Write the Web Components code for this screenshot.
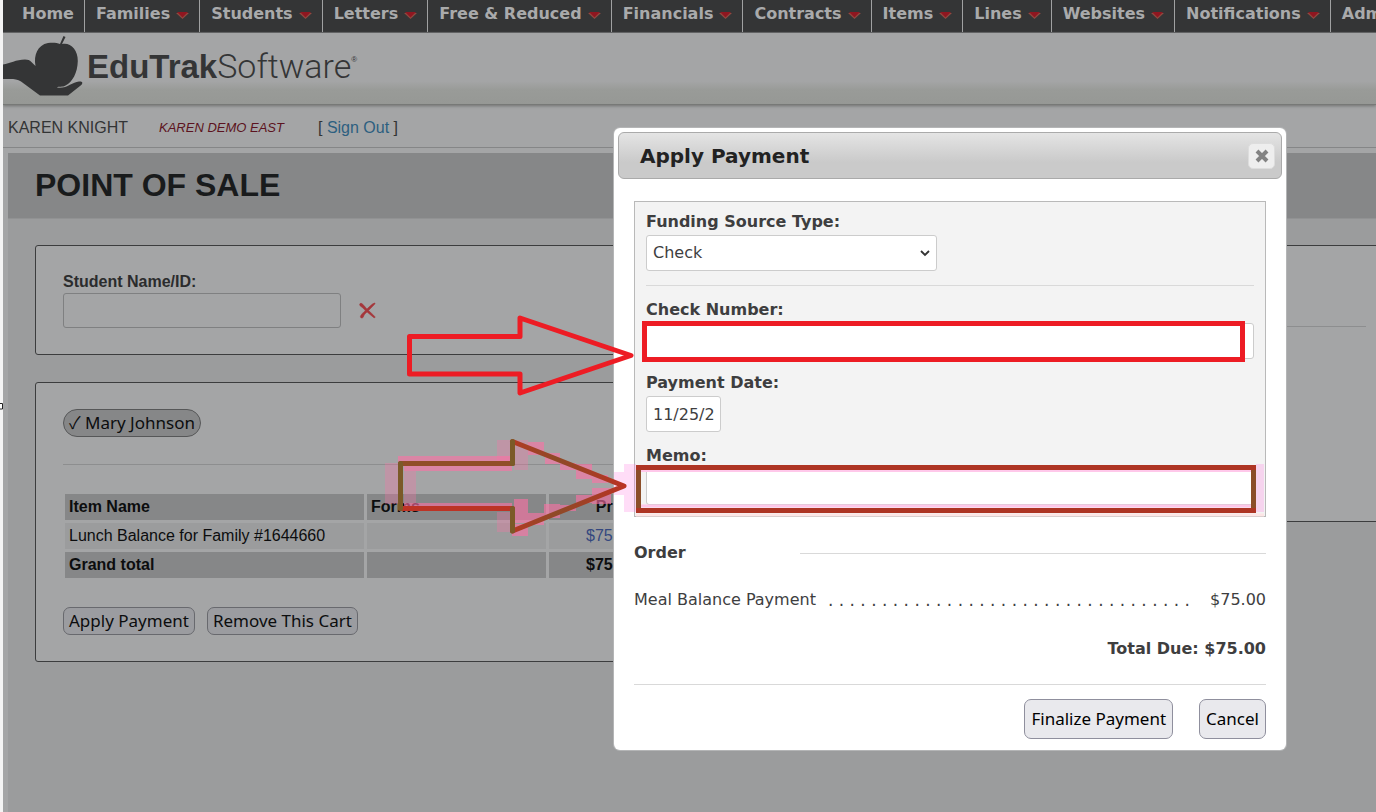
<!DOCTYPE html>
<html lang="en">
<head>
<meta charset="utf-8">
<title>EduTrak Software - Point of Sale</title>
<style>
  body { margin: 0; overflow: hidden; background: #f4f4f4; font: 16px/20px "Liberation Sans", Arial, sans-serif; color: #2b2c2d; }
</style>
</head>
<body>
<pos-app></pos-app>

<template id="t-app">
  <style>
    :host { display: block; position: relative; min-height: 100vh; box-sizing: border-box; padding-left: 3px; }
    .page { display: flex; flex-direction: column; min-height: 100vh; background: #a4a5a6; overflow: hidden; }
    main { flex: 1; margin: 5px 0 0 5px; background: #9b9c9d; }
    h1 { margin: 0; padding: 0 27px; font-size: 32px; line-height: 65px; background: #868788; color: #191b1c; border-bottom: 1px solid #919293; }
    .columns { display: grid; grid-template-columns: 60fr 42fr; gap: 28px; align-items: start; padding: 26px 0 0 27px; margin-right: -18px; }
    .stack { display: grid; gap: 27px; }
    .field { display: grid; justify-items: start; gap: 1px; }
    label { font-weight: bold; }
    .row { display: flex; align-items: center; gap: 18px; }
    input { box-sizing: border-box; width: 278px; height: 35px; border: 1px solid #7f8081; border-radius: 3px; background: #a4a5a6; font: inherit; padding: 0 6px; }
    .icon { border: 0; background: none; padding: 0; display: flex; }
    .cart { display: grid; justify-items: start; }
    hr { width: 100%; margin: 27px 0; border: 0; border-top: 1px solid #8d8e8f; }
    table { border-collapse: separate; border-spacing: 3px; margin: -1px; color: #0c0d0e; }
    th, td { box-sizing: border-box; height: 26px; padding: 0 4px; text-align: left; line-height: 24px; }
    tr.dark > * { background: #868788; font-weight: bold; }
    td { background: #9b9c9d; }
    .c1 { width: 299px; } .c2 { width: 179px; } .c3 { width: 90px; }
    .num { text-align: right; }
    a { color: #34487f; text-decoration: none; }
    .actions { display: flex; gap: 12px; margin-top: 27px; }
    .side { box-sizing: border-box; height: 277px; }
    .side hr { margin: 54px 0 0; }
  </style>
  <div class="page">
    <main-menu></main-menu>
    <brand-header></brand-header>
    <user-bar></user-bar>
    <main>
      <h1>POINT OF SALE</h1>
      <div class="columns">
        <div class="stack">
          <panel-card>
            <div class="field">
              <label for="student">Student Name/ID:</label>
              <div class="row">
                <input id="student" type="text">
                <button class="icon" type="button" aria-label="Clear"><svg width="17" height="17" viewBox="0 0 16 16"><path d="M1 1.500c2-1 3 1.500 6.500 5C10 4.500 12.500 1.500 14.500 1c1 .2.800.800-.2 1.500L9 8c2 2 4.500 4 6 5.800.5 1-.5 1.300-1.300.7L7.600 9.400C5.600 11 4.500 12.500 4 14.300c-.7 1.200-2.700.8-2.700-.5C1.500 12 4.500 9.500 6 7.900 4 6 2.500 4.500 1 3.500.5 2.800.5 2 1 1.500Z" fill="#a5373b" stroke="#a5373b" stroke-width=".5"/></svg></button>
              </div>
            </div>
          </panel-card>
          <panel-card>
            <div class="cart">
              <push-button kind="chip">✓ Mary Johnson</push-button>
              <hr>
              <table>
                <tr class="dark"><th class="c1">Item Name</th><th class="c2">Forms</th><th class="c3 num">Price</th></tr>
                <tr><td>Lunch Balance for Family #1644660</td><td></td><td class="num"><a href="#">$75.00</a></td></tr>
                <tr class="dark"><td>Grand total</td><td></td><td class="num">$75.00</td></tr>
              </table>
              <div class="actions">
                <push-button kind="dim">Apply Payment</push-button>
                <push-button kind="dim">Remove This Cart</push-button>
              </div>
            </div>
          </panel-card>
        </div>
        <panel-card class="side"><hr></panel-card>
      </div>
    </main>
  </div>
  <payment-dialog></payment-dialog>
  <callout-layer></callout-layer>
</template>

<template id="t-menu">
  <style>
    :host { display: block; background: #343536; border-bottom: 1px solid #606162; font: bold 16px/20px "DejaVu Sans", Verdana, sans-serif; }
    nav { display: flex; height: 32px; padding-left: 8px; }
    a { display: flex; flex: none; align-items: center; gap: 6px; box-sizing: border-box; height: 32px; padding: 0 10px 4px 11px; border-right: 1px solid #a0a1a2; color: #a9aaab; text-decoration: none; }
    svg { margin-top: 2px; }
  </style>
  <nav></nav>
</template>

<template id="t-header">
  <style>
    :host { display: flex; align-items: flex-start; height: 71px; background: linear-gradient(#a4a5a6 0 68%, #999b98 80%, #969895); border-bottom: 1px solid #777977; box-shadow: 0 1px 3px #707170; color: #343536; }
    svg { flex: none; }
    .name { display: flex; align-items: baseline; padding: 9px 0 0 1px; line-height: 48px; }
    b { font-size: 33px; }
    span { font: 300 34px/48px Roboto, sans-serif; }
    sup { font-size: 8px; line-height: 8px; align-self: flex-start; padding-top: 14px; }
  </style>
  <svg width="83" height="71" viewBox="0 0 83 71" fill="#343536" aria-hidden="true">
    <path d="M57 11 L60.500 3 L62.500 4 L59 11 C67 9 75 16 74.800 28 C74.500 40 69.500 49 62.500 52.500 C60 54.500 55 53 54 54.500 C63 56.500 69 49 76 48.500 C80 48 80.500 50.500 77 53 L65 62.500 H37 L18 48.500 C13 45 6 46.500 0 46 V31.500 C7 30.500 13 26.500 22 26.500 C28 26.500 29 30 32.500 33 C30.500 22 34.500 12 45 10 C50 9.200 54 9.800 57 11Z"/>
  </svg>
  <div class="name"><b>EduTrak</b><span>Software</span><sup>®</sup></div>
</template>

<template id="t-user">
  <style>
    :host { display: flex; align-items: center; box-sizing: border-box; height: 43px; padding: 4px 0 0 5px; border-bottom: 1px solid #858687; color: #333435; }
    em { margin: 0 34px 0 31px; font-size: 13px; color: #5c1320; }
    a { color: #2d5f80; text-decoration: none; }
  </style>
  <span>KAREN KNIGHT</span><em>KAREN DEMO EAST</em><span>[ <a href="#">Sign Out</a> ]</span>
</template>

<template id="t-card">
  <style>:host { display: block; padding: 26px 27px; border: 1px solid #3c3d3e; border-radius: 3px; background: #a4a5a6; }</style>
  <slot></slot>
</template>

<template id="t-button">
  <style>
    :host { display: inline-flex; }
    button { box-sizing: border-box; height: 28px; padding: 0 5px; border: 1px solid #68696e; border-radius: 7px; background: #9b9ca0; color: #0c0d0e; font: 17px/24px "Noto Sans", "Noto Sans CJK SC", "DejaVu Sans", sans-serif; white-space: nowrap; }
    :host([kind=chip]) button { border-radius: 14px; background: #868788; border-color: #565758; }
    :host([kind=light]) button { height: 40px; padding: 0 6px; background: #e9e9ed; border-color: #8f8f9d; color: #000; }
  </style>
  <button type="button"><slot></slot></button>
</template>

<template id="t-dialog">
  <style>
    :host { position: absolute; left: 614px; top: 128px; width: 672px; box-sizing: border-box; padding: 4px 4px 11px; border-radius: 6px; background: #fff; box-shadow: 0 0 0 1px #b4b5b6; font: 16px/20px "DejaVu Sans", Verdana, sans-serif; color: #3e3e3f; }
    header { display: flex; align-items: center; justify-content: space-between; box-sizing: border-box; height: 47px; padding: 0 6px 0 21px; border: 1px solid #aaa; border-radius: 6px; background: linear-gradient(#e4e4e4, #cacaca 65%, #cacaca); }
    h2 { margin: 0; font-size: 20px; color: #222; }
    .close { display: grid; place-items: center; width: 27px; height: 26px; padding: 0; border: 1px solid #ddd; border-radius: 5px; background: #eee; }
    .body { padding: 22px 16px 0; }
    form { display: grid; gap: 14px; padding: 10px 11px 11px; border: 1px solid #b9b9b9; background: #f3f3f3; }
    .field { display: grid; justify-items: start; gap: 3px; }
    label, h3, .total { font-weight: bold; }
    input, select { box-sizing: border-box; height: 36px; margin: 0; padding: 0 6px; border: 1px solid #ccc; border-radius: 3px; background: #fff; color: inherit; font: inherit; }
    .pick { display: grid; align-items: center; width: 291px; }
    .pick > * { grid-area: 1 / 1; }
    .pick svg { justify-self: end; margin-right: 7px; pointer-events: none; }
    select { appearance: none; width: 100%; }
    .wide { width: 100%; }
    .date { width: 75px; }
    hr { width: 100%; margin: 0; border: 0; border-top: 1px solid #d9d9d9; }
    .order { display: grid; grid-template-columns: 166px 1fr; align-items: center; margin-top: 26px; }
    h3 { margin: 0; font-size: 16px; }
    .line { display: flex; gap: 12px; margin-top: 27px; }
    .dots { flex: 1; height: 20px; overflow: hidden; white-space: nowrap; font-size: 17px; }
    .total { margin: 29px 0 25px; text-align: right; }
    footer { display: flex; justify-content: flex-end; gap: 26px; margin-top: 14px; }
  </style>
  <header><h2>Apply Payment</h2>
    <button class="close" type="button" aria-label="Close"><svg width="14" height="14" viewBox="0 0 14 14"><path d="M2 2 12 12M12 2 2 12" stroke="#828282" stroke-width="4"/></svg></button>
  </header>
  <div class="body">
    <form>
      <div class="field"><label for="source">Funding Source Type:</label>
        <div class="pick"><select id="source"><option>Check</option></select><svg width="10" height="7" viewBox="0 0 10 7"><path d="M1 1 5 5 9 1" fill="none" stroke="#333" stroke-width="1.800"/></svg></div></div>
      <hr>
      <div class="field"><label for="number">Check Number:</label><input id="number" class="wide" type="text"></div>
      <div class="field"><label for="date">Payment Date:</label><input id="date" class="date" type="text" value="11/25/2024"></div>
      <div class="field"><label for="memo">Memo:</label><input id="memo" class="wide" type="text"></div>
    </form>
    <div class="order"><h3>Order</h3><hr></div>
    <div class="line"><span>Meal Balance Payment</span><span class="dots">. . . . . . . . . . . . . . . . . . . . . . . . . . . . . . . . . .</span><span>$75.00</span></div>
    <div class="total">Total Due: $75.00</div>
    <hr>
    <footer><push-button kind="light">Finalize Payment</push-button><push-button kind="light">Cancel</push-button></footer>
  </div>
</template>

<template id="t-callouts">
  <style>:host { position: absolute; left: 0; top: 0; pointer-events: none; } svg { display: block; }</style>
  <svg width="1300" height="560" viewBox="0 0 1300 560" fill="none" aria-hidden="true">
    <path d="M-2 403.500H2.500V409H-2" stroke="#222" fill="#fff"/>
    <path d="M398 456H514V462H398ZM404 466H512V471H404ZM404 503H512V507H404ZM528 442H544V455H528ZM545 453H560V464H545ZM560 463H576V470H560ZM576 464H592V479H576ZM592 475H608V483H592ZM592 488H611V504H592ZM576 495H592V503H576ZM560 505H576V511H560ZM544 504H560V518H544ZM528 513H544V525H528ZM512 524H528V536H512ZM514 499H528V523H514Z" fill="#ff6fa5" opacity=".6"/>
    <path d="M385 463H398V504H385ZM404 471H416V503H404ZM497 440H528V461H497ZM514 461H528V470H514ZM497 512H510V532H497Z" fill="#ff6fa5" opacity=".3"/>
    <path d="M624 464H636V512H624ZM614 472H624V495H614ZM1256 464H1264V512H1256Z" fill="#ff80e0" opacity=".27"/>
    <path d="M641 470.500H1251M641 506H1251" stroke="#ffc8ea" stroke-width="3"/>
    <path d="M636 515H1264" stroke="#fde6e6" stroke-width="3"/>
    <g stroke="#ed1c24" stroke-width="5">
      <path d="M409.500 336.500H520V318L631 355.500 520 393V374H409.500Z" stroke-linejoin="round"/>
      <path d="M644.500 323.500H1242.500V359.500H644.500Z"/>
    </g>
    <g stroke-width="5" stroke-linejoin="round" stroke-linecap="round">
      <path d="M400.500 508.500H512.500" stroke="#bd3325"/>
      <path d="M400.500 463.500H512.500" stroke="#904e27"/>
      <path d="M512.500 441.500 624 486 512.500 531" stroke="url(#tip)"/>
      <path d="M400.500 463.500V508.500M512.500 441.500V463.500M512.500 508.500V531" stroke="#7b5a28"/>
    </g>
    <path d="M638.500 465V513M1253.500 465V513" stroke="#8b4e28" stroke-width="5"/>
    <path d="M636 467.500H1256M636 510.500H1256" stroke="#ae3524" stroke-width="5"/>
    <defs><linearGradient id="tip"><stop stop-color="#b23a24"/><stop offset=".4" stop-color="#8e4a27"/><stop offset="1" stop-color="#b93323"/></linearGradient></defs>
  </svg>
</template>

<script>
  const define = (tag, id, setup) => customElements.define(tag, class extends HTMLElement {
    constructor() {
      super();
      this.attachShadow({ mode: "open" }).append(document.getElementById(id).content.cloneNode(true));
      if (setup) setup(this.shadowRoot);
    }
  });
  define("main-menu", "t-menu", root => {
    const arrow = '<svg width="13" height="7" viewBox="0 0 13 7"><path d="M0 1H13L6.500 7Z" fill="#8e4a40"/><path d="M1 0H12L6.500 5.500Z" fill="#8f1620"/></svg>';
    const items = ["Home", "Families", "Students", "Letters", "Free &amp; Reduced", "Financials", "Contracts", "Items", "Lines", "Websites", "Notifications", "Administration"];
    root.querySelector("nav").innerHTML = items.map((name, i) => `<a href="#"><span>${name}</span>${i ? arrow : ""}</a>`).join("");
  });
  define("brand-header", "t-header");
  define("user-bar", "t-user");
  define("panel-card", "t-card");
  define("push-button", "t-button");
  define("payment-dialog", "t-dialog");
  define("callout-layer", "t-callouts");
  define("pos-app", "t-app");
</script>
</body>
</html>
